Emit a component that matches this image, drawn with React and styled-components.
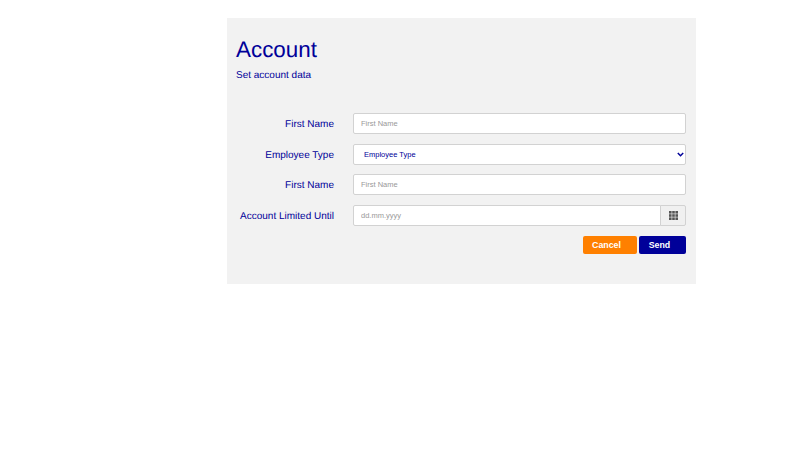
import styled, { createGlobalStyle } from "styled-components";

const navy = "#000099";

export default function App() {
    return (
        <>
            <GlobalStyle />
            <Page>
                <Panel>
                    <Title>Account</Title>
                    <Subtitle>Set account data</Subtitle>
                    <Form onSubmit={(e) => e.preventDefault()}>
                        <Row>
                            <Label htmlFor="first-name">First Name</Label>
                            <TextInput id="first-name" placeholder="First Name" />
                        </Row>
                        <Row>
                            <Label htmlFor="employee-type">Employee Type</Label>
                            <SelectWrap>
                                <Select id="employee-type" defaultValue="Employee Type">
                                    <option>Employee Type</option>
                                </Select>
                                <Chevron width="7" height="5" viewBox="0 0 7 5">
                                    <path d="M0.8 1 L3.5 3.7 L6.2 1" fill="none" stroke={navy} strokeWidth="1.5" />
                                </Chevron>
                            </SelectWrap>
                        </Row>
                        <Row>
                            <Label htmlFor="first-name-2">First Name</Label>
                            <TextInput id="first-name-2" placeholder="First Name" />
                        </Row>
                        <Row>
                            <Label htmlFor="limited-until">Account Limited Until</Label>
                            <InputGroup>
                                <DateInput id="limited-until" placeholder="dd.mm.yyyy" />
                                <CalendarAddon>
                                    <svg width="9" height="9" viewBox="0 0 9 9" fill="#555">
                                        {[0, 3.2, 6.4].map((y) =>
                                            [0, 3.2, 6.4].map((x) => (
                                                <rect key={`${x}-${y}`} x={x} y={y} width="2.6" height="2.6" />
                                            ))
                                        )}
                                    </svg>
                                </CalendarAddon>
                            </InputGroup>
                        </Row>
                        <Actions>
                            <CancelButton type="button">Cancel</CancelButton>
                            <SendButton type="submit">Send</SendButton>
                        </Actions>
                    </Form>
                </Panel>
            </Page>
        </>
    );
}

const GlobalStyle = createGlobalStyle`
    html, body {
        margin: 0;
        padding: 0;
        background: #ffffff;
    }

    * {
        box-sizing: border-box;
    }

    body {
        font-family: "Liberation Sans", Arial, sans-serif;
        color: ${navy};
        text-rendering: geometricPrecision;
    }
`;

const Page = styled.div`
    width: 800px;
    height: 450px;
    padding: 18px 104.5px 0 227px;
`;

const Panel = styled.section`
    height: 266px;
    padding: 18px 9.5px 0 9px;
    background-color: #f2f2f2;
`;

const Title = styled.h1`
    margin: 0;
    height: 27px;
    font-size: 22.4px;
    font-weight: 400;
    line-height: 27px;
`;

const Subtitle = styled.p`
    margin: 6px 0 0 0;
    height: 14px;
    font-size: 10px;
    line-height: 14px;
`;

const Form = styled.form`
    display: flex;
    flex-direction: column;
    gap: 9.7px;
    margin-top: 30px;
`;

const Row = styled.div`
    display: grid;
    grid-template-columns: 98px 333px;
    column-gap: 19px;
    align-items: center;
    height: 21px;
`;

const Label = styled.label`
    padding-top: 2px;
    font-size: 10px;
    text-align: right;
    white-space: nowrap;
`;

const fieldBorder = "1px solid #d2d2d2";

const TextInput = styled.input`
    width: 100%;
    height: 21px;
    padding: 0 7px;
    border: ${fieldBorder};
    border-radius: 2px;
    background: #ffffff;
    font-family: inherit;
    font-size: 7.5px;
    color: ${navy};
    outline: none;

    &::placeholder {
        color: #999999;
        opacity: 1;
    }
`;

const SelectWrap = styled.div`
    position: relative;
    height: 21px;
`;

const Select = styled.select`
    appearance: none;
    display: block;
    width: 100%;
    height: 21px;
    padding: 0 0 0 10px;
    border: ${fieldBorder};
    border-radius: 2px;
    background: #ffffff;
    font-family: inherit;
    font-size: 7.5px;
    color: ${navy};
    outline: none;
`;

const Chevron = styled.svg`
    position: absolute;
    top: 8px;
    right: 2px;
    pointer-events: none;
`;

const InputGroup = styled.div`
    display: flex;
    width: 100%;
`;

const DateInput = styled(TextInput)`
    flex: 1;
    width: auto;
    min-width: 0;
    border-radius: 2px 0 0 2px;
`;

const CalendarAddon = styled.span`
    display: flex;
    align-items: center;
    justify-content: center;
    width: 26px;
    height: 21px;
    margin-left: -1px;
    border: ${fieldBorder};
    border-radius: 0 2px 2px 0;
    background: #f0f0f0;
`;

const Actions = styled.div`
    display: flex;
    justify-content: flex-end;
    gap: 2px;
`;

const Button = styled.button`
    height: 18px;
    padding: 0;
    border: none;
    border-radius: 2px;
    font-family: inherit;
    font-size: 8.8px;
    font-weight: 700;
    color: #ffffff;
`;

const CancelButton = styled(Button)`
    width: 54px;
    padding-right: 7px;
    background-color: #ff8000;
`;

const SendButton = styled(Button)`
    width: 47px;
    padding-right: 6px;
    background-color: ${navy};
`;
